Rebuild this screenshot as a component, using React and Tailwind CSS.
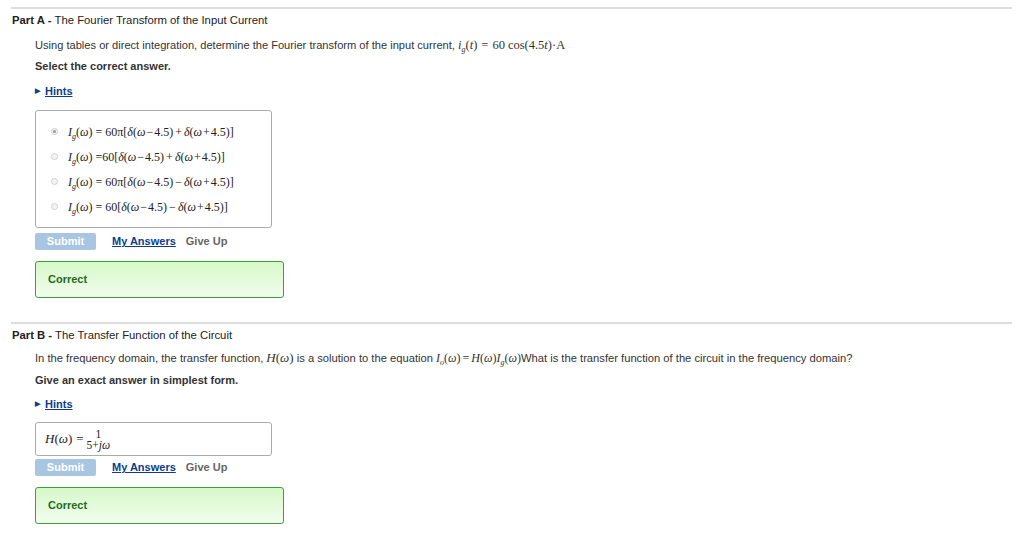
import React from "react";

const M = ({ children, className = "" }) => (
  <span className={`italic ${className}`} style={{ fontFamily: '"Liberation Serif", "DejaVu Serif", serif' }}>{children}</span>
);
const R = ({ children, className = "" }) => (
  <span className={className} style={{ fontFamily: '"Liberation Serif", "DejaVu Serif", serif' }}>{children}</span>
);
const Sp = ({ w = 3 }) => <span className="inline-block" style={{ width: w }} />;

function Iw({ sub }) {
  return (
    <>
      <M>I</M>
      <M className="text-[8px] relative top-[3px]">{sub}</M>
      <R>(</R>
      <M>ω</M>
      <R>)</R>
    </>
  );
}

function Hints() {
  return (
    <div className="flex items-center gap-[5px] text-[11px] font-bold">
      <span className="text-[7px] text-[#0c3c8c]">▶</span>
      <span className="text-[#0c3c8c] underline">Hints</span>
    </div>
  );
}

function Actions() {
  return (
    <div className="flex items-center h-[17px] text-[11px] font-bold">
      <div className="w-[61px] h-[17px] rounded-[2px] bg-[#a8c6e2] text-white flex items-center justify-center">Submit</div>
      <span className="ml-[16px] text-[#0c3c8c] underline">My Answers</span>
      <span className="ml-[10px] text-[#666]">Give Up</span>
    </div>
  );
}

function Correct() {
  return (
    <div className="w-[249px] h-[37px] border-[1.5px] border-[#3e9e3a] rounded-[3px] bg-gradient-to-b from-[#d6f8c8] to-[#f2fdee] flex items-center pl-[12px] text-[11px] font-bold text-[#1d6a1d]">
      Correct
    </div>
  );
}

function Opt({ selected, children }) {
  return (
    <div className="flex items-center h-[25px]">
      <span className="w-[7px] h-[7px] rounded-full border border-[#d0d0d0] flex items-center justify-center bg-[#f4f4f4]">
        {selected && <span className="w-[3px] h-[3px] rounded-full bg-[#999]" />}
      </span>
      <span className="ml-[10px] text-[12px] text-[#222] whitespace-nowrap">{children}</span>
    </div>
  );
}

function Expr({ eq = " = ", pi, op }) {
  return (
    <>
      <Iw sub="g" /><R>{eq}</R><R>60{pi ? "π" : ""}[</R><M>δ</M><R>(</R><M>ω</M><Sp w={1} /><R>−</R><Sp w={1} /><R>4.5)</R><Sp w={2} /><R>{op}</R><Sp w={2} /><M>δ</M><R>(</R><M>ω</M><Sp w={1} /><R>+</R><Sp w={1} /><R>4.5)]</R>
    </>
  );
}

export default function App() {
  return (
    <div className="w-[1024px] h-[542px] bg-white text-[#222] overflow-hidden" style={{ fontFamily: '"Liberation Sans", Arial, sans-serif' }}>
      <div className="pt-[7px]">
        <div className="ml-[11px] w-[1001px] h-[2px] bg-[#ddd]" />
        <div className="ml-[12px] mt-[4px] h-[14px] flex items-center text-[11.3px] whitespace-nowrap">
          <span className="font-bold">Part A</span>
          <span className="ml-[3px]"><b>-</b> The Fourier Transform of the Input Current</span>
        </div>
        <div className="ml-[35px]">
          <div className="mt-[11px] h-[14px] flex items-center text-[11.1px] text-[#333] whitespace-nowrap">
            <span>Using tables or direct integration, determine the Fourier transform of the input current,&nbsp;</span>
            <span className="text-[12.5px]">
              <M>i</M><M className="text-[8px] relative top-[3px]">g</M><R>(</R><M>t</M><R>)</R>
              <Sp w={4} /><R>=</R><Sp w={4} /><R>60</R><Sp w={3} /><R>cos(4.5</R><M>t</M><R>)·A</R>
            </span>
          </div>
          <div className="mt-[7px] h-[14px] flex items-center text-[11px] font-bold text-[#333]">Select the correct answer.</div>
          <div className="mt-[11px] h-[14px] flex items-center"><Hints /></div>
          <div className="mt-[12px] w-[237px] h-[118px] border border-[#aaa] rounded-[3px] pl-[15px] pt-[8px]">
            <Opt selected><Expr pi op="+" /></Opt>
            <Opt><Expr eq=" =" op="+" /></Opt>
            <Opt><Expr pi op="−" /></Opt>
            <Opt><Expr op="−" /></Opt>
          </div>
          <div className="mt-[5px]"><Actions /></div>
          <div className="mt-[11px]"><Correct /></div>
        </div>

        <div className="mt-[24px] ml-[11px] w-[1001px] h-[2px] bg-[#ddd]" />
        <div className="ml-[12px] mt-[4px] h-[14px] flex items-center text-[11.3px] whitespace-nowrap">
          <span className="font-bold">Part B</span>
          <span className="ml-[3px]"><b>-</b> The Transfer Function of the Circuit</span>
        </div>
        <div className="ml-[35px]">
          <div className="mt-[9px] h-[14px] flex items-center text-[11.2px] text-[#333] whitespace-nowrap">
            <span>In the frequency domain, the transfer function,&nbsp;</span>
            <span className="text-[13px]"><M>H</M><R>(</R><M>ω</M><R>)</R></span>
            <span>&nbsp;is a solution to the equation&nbsp;</span>
            <span className="text-[12px]">
              <Iw sub="o" /><Sp w={2} /><R>=</R><Sp w={2} /><M>H</M><R>(</R><M>ω</M><R>)</R><Iw sub="g" />
            </span>
            <span>What is the transfer function of the circuit in the frequency domain?</span>
          </div>
          <div className="mt-[8px] h-[14px] flex items-center text-[11px] font-bold text-[#333]">Give an exact answer in simplest form.</div>
          <div className="mt-[10px] h-[14px] flex items-center"><Hints /></div>
          <div className="mt-[11px] w-[237px] h-[34px] border border-[#aaa] rounded-[3px] pl-[9px] flex items-center text-[13px] text-[#222]">
            <M>H</M><R>(</R><M>ω</M><R>)</R><Sp w={4} /><R>=</R><Sp w={3} />
            <span className="inline-flex flex-col items-center leading-[11px] text-[11.5px] relative top-[1px]">
              <R>1</R>
              <span><R>5+</R><M>jω</M></span>
            </span>
          </div>
          <div className="mt-[3px]"><Actions /></div>
          <div className="mt-[11px]"><Correct /></div>
        </div>
      </div>
    </div>
  );
}
